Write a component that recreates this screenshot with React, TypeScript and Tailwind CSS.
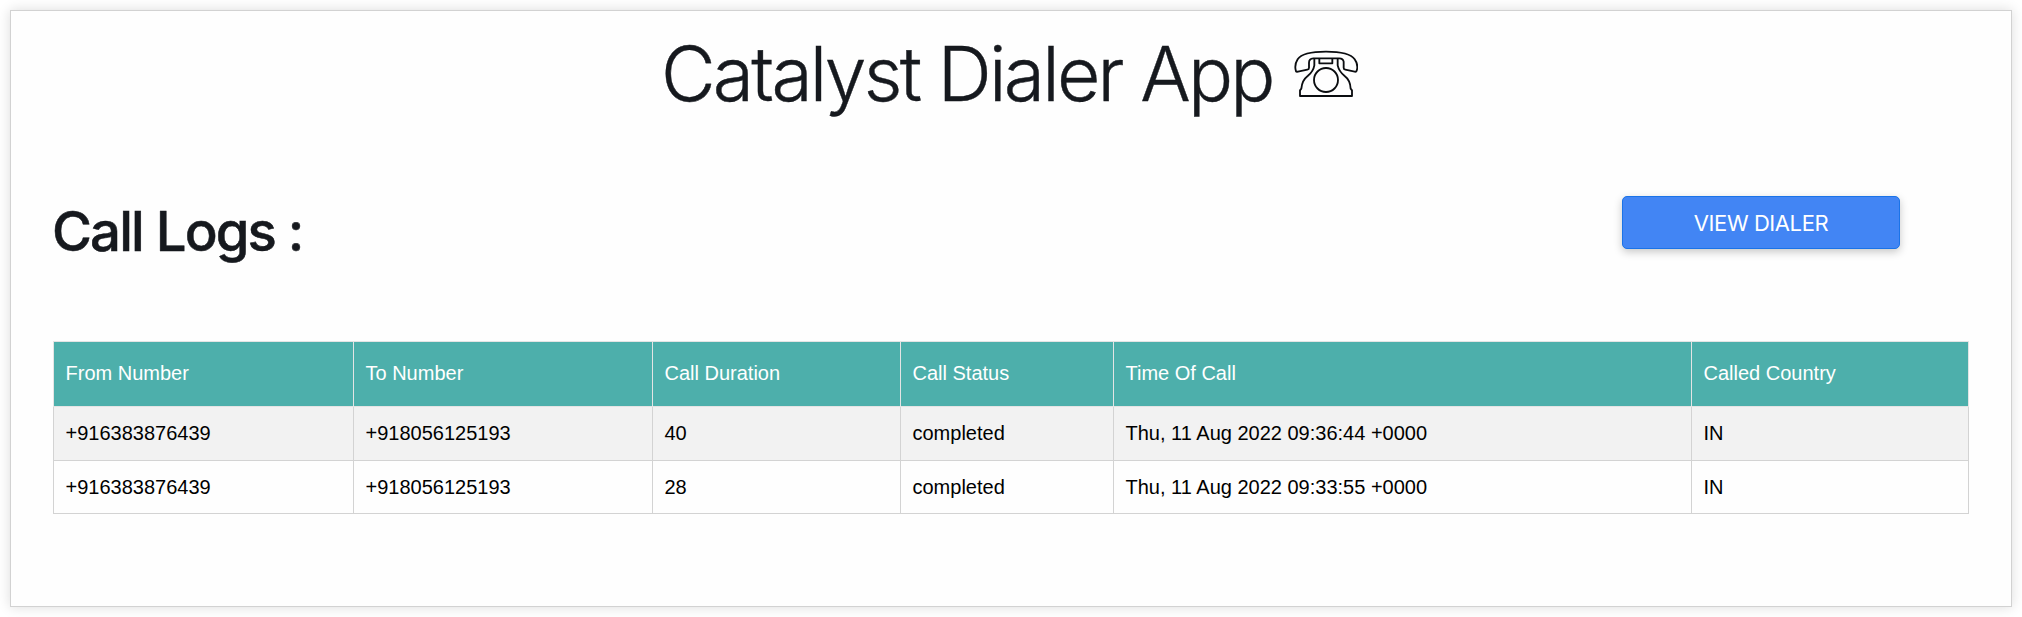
import React from "react";

const logs = [
  {
    from: "+916383876439",
    to: "+918056125193",
    duration: 40,
    status: "completed",
    time: "Thu, 11 Aug 2022 09:36:44 +0000",
    country: "IN",
  },
  {
    from: "+916383876439",
    to: "+918056125193",
    duration: 28,
    status: "completed",
    time: "Thu, 11 Aug 2022 09:33:55 +0000",
    country: "IN",
  },
];

const headers = [
  "From Number",
  "To Number",
  "Call Duration",
  "Call Status",
  "Time Of Call",
  "Called Country",
];

const PhoneIcon: React.FC = () => (
  <svg
    className="mt-[39px] h-[48px] w-[64px]"
    viewBox="522 89 192 144"
    fill="none"
    stroke="#0b0d10"
    strokeWidth="5.5"
    strokeLinejoin="round"
  >
    {/* Handset */}
    <path d="M528 153Q522 134 533 117Q548 94 618 94Q688 94 704 117Q716 134 710 151Q709 155 704 154L676 148Q671 147 671 142L671 124Q669 114 658 114L580 114Q567 115 567 127L567 142Q567 147 562 148L534 154Q529 155 528 153Z" />
    {/* Cradle */}
    <path d="M598 113V129H637V113" />
    {/* Base */}
    <path d="M583 113V135Q580 153 563 167Q546 180 544 205L540 210V227H696V210L692 205Q691 180 674 167Q657 153 653 135V113" />
    <circle cx="618" cy="179" r="36" />
  </svg>
);

const App: React.FC = () => {
  return (
    <div className="h-[617px] bg-white p-[10px] font-['Inter',sans-serif] text-[#16191e]">
      <div className="h-[597px] w-[2002px] border border-[#d2d2d2] bg-[#fefefe] px-[42px] shadow-[0_0_12px_rgba(0,0,0,0.14)]">
        {/* Title */}
        <div className="flex h-[120px] items-start pl-[608px]">
          <h1 className="w-[633px] pt-[17px] text-[75px] leading-[92px] font-light tracking-[-2.75px] whitespace-nowrap [-webkit-text-stroke:0.4px_#16191e]">
            Catalyst Dialer App
          </h1>
          <PhoneIcon />
        </div>

        {/* Heading and dialer link */}
        <div className="flex h-[210px] items-start justify-between pr-[69px]">
          <h2 className="-ml-px pt-[66px] text-[54.5px] leading-[68px] font-medium tracking-[-1.85px] [-webkit-text-stroke:0.5px_#16191e]">
            Call Logs :
          </h2>
          <button className="mt-[65px] h-[53px] w-[278px] rounded-[5px] border border-[#1a73e8] bg-[#4285f4] pt-[2px] text-[22px] tracking-[-0.42px] text-white shadow-[0_3px_8px_rgba(0,0,0,0.22)]">
            VIEW DIALER
          </button>
        </div>

        {/* Call logs table */}
        <table className="w-[1916px] table-fixed border-collapse text-left font-['Liberation_Sans',Arial,sans-serif] text-[20px] text-black">
          <colgroup>
            <col className="w-[300px]" />
            <col className="w-[299px]" />
            <col className="w-[248px]" />
            <col className="w-[213px]" />
            <col className="w-[578px]" />
            <col className="w-[277px]" />
          </colgroup>
          <thead>
            <tr className="h-[65px] bg-[#4dafab] text-white">
              {headers.map((header) => (
                <th key={header} className="border border-[#e4e4e4] px-[11.5px] pb-[2px] font-normal">
                  {header}
                </th>
              ))}
            </tr>
          </thead>
          <tbody>
            {logs.map((log) => (
              <tr key={log.time} className="h-[53.5px] odd:bg-[#f2f2f2]">
                {Object.values(log).map((value, index) => (
                  <td key={index} className="border border-[#d3d3d3] px-[11.5px]">
                    {value}
                  </td>
                ))}
              </tr>
            ))}
          </tbody>
        </table>
      </div>
    </div>
  );
};

export default App;
